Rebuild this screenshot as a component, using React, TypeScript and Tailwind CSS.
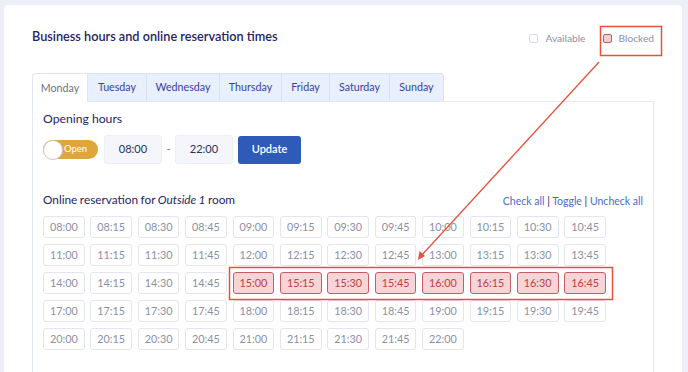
import React from "react";

const times: string[] = [];
for (let h = 8; h <= 22; h++) {
  for (const m of [0, 15, 30, 45]) {
    if (h === 22 && m > 0) break;
    times.push(`${String(h).padStart(2, "0")}:${String(m).padStart(2, "0")}`);
  }
}
const blocked = new Set(["15:00", "15:15", "15:30", "15:45", "16:00", "16:15", "16:30", "16:45"]);

const tabs: { name: string; w: string }[] = [
  { name: "Monday", w: "w-[56px]" },
  { name: "Tuesday", w: "w-[59px]" },
  { name: "Wednesday", w: "w-[73px]" },
  { name: "Thursday", w: "w-[62px]" },
  { name: "Friday", w: "w-[48px]" },
  { name: "Saturday", w: "w-[60px]" },
  { name: "Sunday", w: "w-[54px]" },
];

export default function App() {
  return (
    <div
      className="relative w-[688px] h-[372px] overflow-hidden bg-[#eceef8] pl-[4px] pr-[6px] pt-[5px]"
      style={{ fontFamily: "Lato, 'Open Sans', sans-serif" }}
    >
      <div className="h-[400px] bg-white rounded-[4px] px-[28px] pt-[21px]">
        <div className="flex items-center justify-between h-[22px]">
          <div className="text-[12.7px] font-semibold text-[#1f2567]">
            Business hours and online reservation times
          </div>
          <div className="flex items-center text-[10.2px] text-[#8c90a8] mt-[4px]">
            <span className="w-[9px] h-[9px] border border-[#d6dbec] rounded-[2px] bg-white" />
            <span className="ml-[7px]">Available</span>
            <span className="ml-[17px] w-[9px] h-[9px] border border-[#c85a5e] rounded-[2px] bg-[#f4cfd2]" />
            <span className="ml-[7px]">Blocked</span>
          </div>
        </div>

        <div className="flex mt-[25px] h-[28px]">
          {tabs.map((t, i) => (
            <div
              key={t.name}
              className={
                i === 0
                  ? `${t.w} flex items-center justify-center text-[10.7px] text-[#6d7182] bg-white border-t border-l border-r border-[#dfe5f5] rounded-tl-[4px] relative z-10 h-[29px]`
                  : `${t.w} flex items-center justify-center text-[10.7px] text-[#3a40a6] bg-[#e8effd] border-t border-r border-[#d8e2f6] ${i === 6 ? "rounded-tr-[4px]" : ""}`
              }
            >
              {t.name}
            </div>
          ))}
        </div>

        <div className="border border-[#e3e8f6] pl-[10px] pr-[10px] pt-[7px] h-[300px]">
          <div className="text-[12.2px] leading-[20px] text-[#1f2567]">Opening hours</div>
          <div className="flex items-center mt-[6px] h-[29px]">
            <div className="relative w-[55px] h-[19px] rounded-full bg-[#dfa63c] flex items-center">
              <span className="absolute left-0 top-[-0.5px] w-[20px] h-[20px] rounded-full bg-white border border-[#c9c9c9]" />
              <span className="ml-[21px] text-[9.5px] text-white">Open</span>
            </div>
            <div className="ml-[6px] w-[58px] h-[29px] rounded-[3px] bg-[#f4f6fc] border border-[#eceff8] flex items-center justify-center text-[11px] text-[#2a2f5a]">
              08:00
            </div>
            <div className="w-[13px] text-center text-[11px] text-[#6d7182]">-</div>
            <div className="w-[58px] h-[29px] rounded-[3px] bg-[#f4f6fc] border border-[#eceff8] flex items-center justify-center text-[11px] text-[#2a2f5a]">
              22:00
            </div>
            <div className="ml-[5px] w-[63px] h-[28px] rounded-[3px] bg-[#2e5bb8] flex items-center justify-center text-[11px] font-semibold text-white">
              Update
            </div>
          </div>

          <div className="flex items-end justify-between mt-[26px] h-[20px]">
            <div className="text-[11.8px] leading-[20px] text-[#1f2567] [word-spacing:-0.5px]">
              Online reservation for <i>Outside 1</i> room
            </div>
            <div className="text-[10.5px] text-[#4a6ccc] leading-[18px]">
              Check all <span className="text-[#1f2567]">|</span> Toggle{" "}
              <span className="text-[#1f2567]">|</span> Uncheck all
            </div>
          </div>

          <div className="mt-[6px] grid grid-cols-[repeat(12,41.6px)] gap-x-[5.8px] gap-y-[6px]">
            {times.map((t) => {
              const b = blocked.has(t);
              return (
                <div
                  key={t}
                  className={
                    b
                      ? "h-[22px] rounded-[3px] border border-[#c65d60] bg-[#f6d4d7] text-[#c2403d] text-[10.8px] flex items-center justify-center"
                      : "h-[22px] rounded-[3px] border border-[#e2e5f3] bg-white text-[#8b8fa6] text-[10.8px] flex items-center justify-center"
                  }
                >
                  {t}
                </div>
              );
            })}
          </div>
        </div>
      </div>

      <svg className="absolute inset-0 pointer-events-none" width="688" height="372">
        <rect x="600.5" y="26.5" width="61" height="29" fill="none" stroke="#e8503a" strokeWidth="1.5" />
        <rect x="229.5" y="267.5" width="383" height="32" fill="none" stroke="#e8503a" strokeWidth="1.5" />
        <line x1="599" y1="62" x2="421" y2="256" stroke="#e8503a" strokeWidth="1.3" />
        <polygon points="418,260 419.5,251 425,256" fill="#e8503a" />
      </svg>
    </div>
  );
}
